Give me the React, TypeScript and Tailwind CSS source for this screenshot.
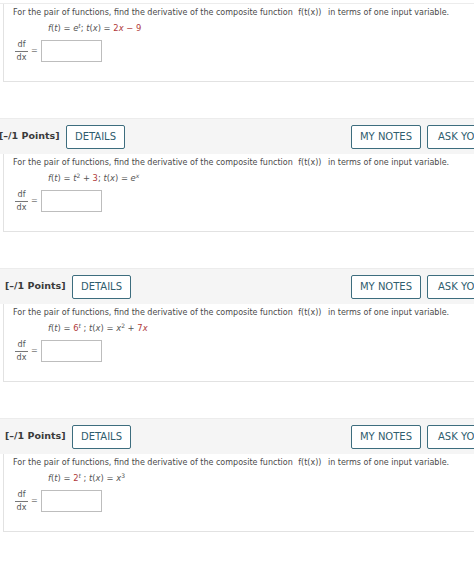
import React from 'react';

const font = 'font-["DejaVu_Sans",Verdana,sans-serif]';

function Red({ children }: { children: React.ReactNode }) {
  return <span className="text-[#b03a3a] not-italic">{children}</span>;
}

function V({ children }: { children: React.ReactNode }) {
  return <i>{children}</i>;
}

type Q = { formula: React.ReactNode; header: boolean; shift?: boolean };

const QUESTIONS: Q[] = [
  {
    header: false,
    formula: (
      <>
        <V>f</V>(<V>t</V>) = <V>e</V><sup className="text-[6px]"><V>t</V></sup>; <V>t</V>(<V>x</V>) = <Red>2<V>x</V> − 9</Red>
      </>
    ),
  },
  {
    header: true,
    shift: true,
    formula: (
      <>
        <V>f</V>(<V>t</V>) = <V>t</V><sup className="text-[6px]">2</sup> + <Red>3</Red>; <V>t</V>(<V>x</V>) = <V>e</V><sup className="text-[6px]"><V>x</V></sup>
      </>
    ),
  },
  {
    header: true,
    formula: (
      <>
        <V>f</V>(<V>t</V>) = <Red>6</Red><sup className="text-[6px]"><V>t</V></sup> ; <V>t</V>(<V>x</V>) = <V>x</V><sup className="text-[6px]">2</sup> + <Red>7<V>x</V></Red>
      </>
    ),
  },
  {
    header: true,
    formula: (
      <>
        <V>f</V>(<V>t</V>) = <Red>2</Red><sup className="text-[6px]"><V>t</V></sup> ; <V>t</V>(<V>x</V>) = <V>x</V><sup className="text-[6px]">3</sup>
      </>
    ),
  },
];

function Btn({ label, className = '' }: { label: string; className?: string }) {
  return (
    <div
      className={`h-[24px] flex items-center justify-center border-[1.5px] border-[#3d6d7e] rounded-[2px] bg-white text-[#2f5d6e] text-[10px] font-medium whitespace-nowrap ${className}`}
    >
      {label}
    </div>
  );
}

function Header({ shift }: { shift?: boolean }) {
  return (
    <div className="h-[36px] bg-[#f5f5f5] border-t border-[#ececec] flex items-center overflow-hidden">
      <span className={`${shift ? 'ml-[-1px]' : 'ml-[5px]'} w-[67px] text-[9.5px] font-bold text-[#3a3a3a] shrink-0 whitespace-nowrap`}>
        [–/1 Points]
      </span>
      <Btn label="DETAILS" className="w-[59px] shrink-0" />
      <div className="flex-1" />
      <Btn label="MY NOTES" className="w-[70px] shrink-0 mr-[6px]" />
      <Btn label="ASK YOUR TEACHER" className="w-[116px] shrink-0 justify-start pl-[10px] mr-[-69px]" />
    </div>
  );
}

function Content({ formula }: { formula: React.ReactNode }) {
  return (
    <div className="ml-[3px] h-[78px] border-l border-b border-[#e2e2e2] bg-white pl-[9px] text-[#4a4a4a]">
      <p className="pt-[4px] h-[19px] text-[8px] leading-[10px] whitespace-nowrap">
        For the pair of functions, find the derivative of the composite function <span className="ml-[3px] mr-[4px]">f(t(x))</span> in terms of one input variable.
      </p>
      <p className="pl-[35px] h-[17px] text-[8.4px] leading-[10px] whitespace-nowrap text-[#555]">{formula}</p>
      <div className="flex items-center gap-[3px] pl-[2px]">
        <div className="flex flex-col items-center text-[8px] leading-[8px] text-[#555] w-[13px]">
          <span className="pb-[2px]">df</span>
          <span className="w-[13px] border-t border-[#777]" />
          <span className="pt-[2px]">dx</span>
        </div>
        <span className="text-[8px] text-[#777]">=</span>
        <div className="w-[61px] h-[22px] border border-[#bdbdbd] bg-white" />
      </div>
    </div>
  );
}

export default function App() {
  return (
    <div className={`w-[474px] h-[567px] bg-white overflow-hidden ${font}`}>
      <div className="h-[3px]" />
      {QUESTIONS.map((q, i) => (
        <div key={i} className={i > 0 ? 'mt-[36px]' : ''}>
          {q.header && <Header shift={q.shift} />}
          <div className={q.header ? '' : 'border-t border-[#ececec]'}>
            <Content formula={q.formula} />
          </div>
        </div>
      ))}
    </div>
  );
}
